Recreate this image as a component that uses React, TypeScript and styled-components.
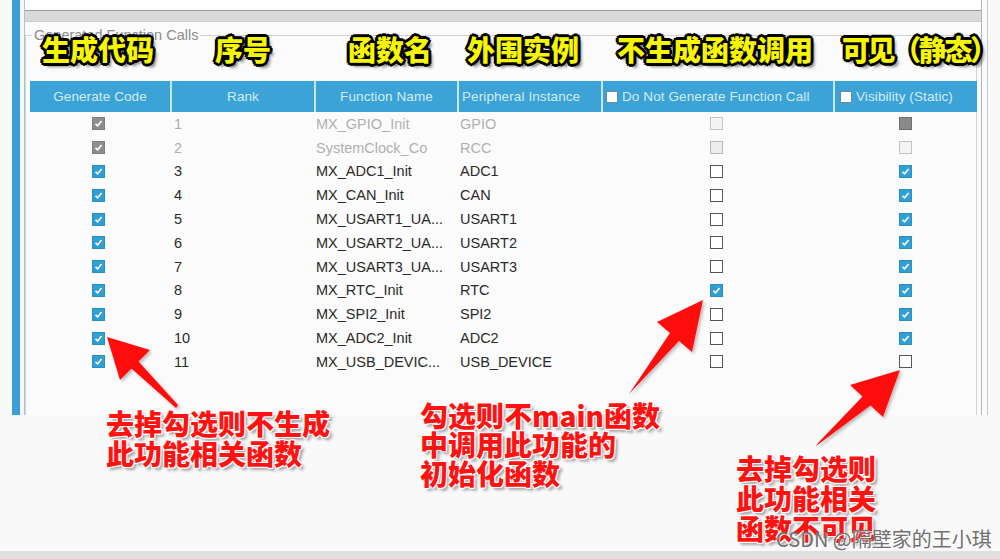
import React from "react";
import styled, { createGlobalStyle, css } from "styled-components";

const Global = createGlobalStyle`
  html, body { margin: 0; padding: 0; background: #fafafa; }
  body { font-family: "Liberation Sans", Arial, sans-serif; }
`;

const COLS = "140px 142px 141px 142px 230px 142px";

const Root = styled.div`
  position: relative;
  width: 1000px;
  height: 559px;
  overflow: hidden;
  display: flex;
  flex-direction: column;
  background: #f9f9f9;
`;

const Window = styled.div`
  display: flex;
  height: 415px;
  flex-shrink: 0;
`;

const LeftBar = styled.div`
  margin-left: 12px;
  width: 8px;
  background: #3c9fd5;
`;

const Gutter = styled.div`
  width: 4px;
  background: #f4f8fb;
`;

const Panel = styled.div`
  width: 956px;
  border-left: 1px solid #b9bfc4;
  border-right: 1px solid #b4b4b4;
  display: flex;
  flex-direction: column;
  background: #fbfbfb;
`;

const OuterEdge = styled.div`
  width: 5px;
  border-right: 1px solid #c9c9c9;
  background: #fafafa;
`;

const TopWhite = styled.div`
  height: 10px;
  background: #ffffff;
`;

const Band = styled.div`
  height: 10px;
  background: #d9d9d9;
  border-top: 1px solid #9d9d9d;
  border-bottom: 1px solid #cdcdcd;
`;

const Body = styled.div`
  flex: 1;
  padding: 5px 4px 0 0;
`;

const Group = styled.fieldset`
  margin: 0;
  padding: 0 0 0 4px;
  border: 1px solid #d2d2d2;
  border-bottom: none;
  height: 100%;
  box-sizing: border-box;
  min-width: 0;
`;

const Legend = styled.legend`
  margin-left: 2px;
  padding: 0 2px;
  font-size: 14.5px;
  line-height: 16px;
  color: #8c8c8c;
`;

const Table = styled.div`
  margin-top: 38px;
  width: 947px;
`;

const HeaderRow = styled.div`
  display: grid;
  grid-template-columns: ${COLS};
  column-gap: 2px;
  height: 31px;
  background: #c4e8f6;
`;

const HeadCell = styled.div<{ $left?: boolean }>`
  background: #3ba3d6;
  color: #d3ecf8;
  font-size: 13.5px;
  display: flex;
  align-items: center;
  justify-content: ${(p) => (p.$left ? "flex-start" : "center")};
  padding-left: ${(p) => (p.$left ? "3px" : "0")};
  white-space: nowrap;
  overflow: hidden;
  gap: 4px;
  letter-spacing: 0.1px;
`;

const Row = styled.div`
  display: grid;
  grid-template-columns: ${COLS};
  column-gap: 2px;
  height: 23.8px;
`;

const Cell = styled.div<{ $center?: boolean; $pad?: number; $dim?: boolean }>`
  display: flex;
  align-items: center;
  justify-content: ${(p) => (p.$center ? "center" : "flex-start")};
  padding-left: ${(p) => p.$pad ?? 0}px;
  font-size: 14.5px;
  color: ${(p) => (p.$dim ? "#b0b0b0" : "#2a2a2a")};
  white-space: nowrap;
  overflow: hidden;
`;

type BoxState = "checked" | "unchecked" | "grayChecked" | "grayFilled" | "disabled" | "disabledMixed" | "header";

const Box = styled.span<{ $s: BoxState; $dx?: number }>`
  display: inline-flex;
  align-items: center;
  justify-content: center;
  width: 13px;
  height: 13px;
  box-sizing: border-box;
  flex-shrink: 0;
  margin-left: ${(p) => p.$dx ?? 0}px;
  ${(p) => {
    switch (p.$s) {
      case "checked":
        return css`background: #2f9fd4; border: 1px solid #2a8fc2;`;
      case "grayChecked":
        return css`background: #8e8e8e; border: 1px solid #7d7d7d;`;
      case "grayFilled":
        return css`background: #8a8a8a; border: 1px solid #6f6f6f;`;
      case "disabled":
        return css`background: #f4f4f4; border: 1px solid #c4c4c4;`;
      case "disabledMixed":
        return css`background: #ededed; border: 1px solid #b8b8b8;`;
      case "header":
        return css`background: #ffffff; border: 1px solid #6a8aa0; width: 12px; height: 12px;`;
      default:
        return css`background: #ffffff; border: 1px solid #555;`;
    }
  }}
`;

const Check = () => (
  <svg width="9" height="9" viewBox="0 0 9 9">
    <path d="M1.5 4.8 L3.6 6.8 L7.6 2" fill="none" stroke="#ffffff" strokeWidth="1.6" />
  </svg>
);

const CheckBox = ({ s, dx }: { s: BoxState; dx?: number }) => (
  <Box $s={s} $dx={dx}>
    {(s === "checked" || s === "grayChecked") && <Check />}
  </Box>
);

const Spacer = styled.div`
  flex: 1;
`;

const BottomStrip = styled.div`
  height: 8px;
  background: #e0e0e0;
`;

const YellowLabel = styled.div<{ $x: number; $ls?: number }>`
  position: absolute;
  left: ${(p) => p.$x}px;
  top: 31px;
  font-family: "Noto Sans CJK SC", sans-serif;
  font-weight: 900;
  font-size: 28px;
  line-height: 36px;
  letter-spacing: ${(p) => p.$ls ?? 0}px;
  color: #f6f600;
  white-space: nowrap;
  text-shadow: -2px -2px 0 #000, 2px -2px 0 #000, -2px 2px 0 #000, 2px 2px 0 #000,
    0 -3px 0 #000, 0 3px 0 #000, -3px 0 0 #000, 3px 0 0 #000, 4px 4px 3px rgba(0, 0, 0, 0.45);
`;

const RedNote = styled.div<{ $x: number; $y: number; $lh: number }>`
  position: absolute;
  left: ${(p) => p.$x}px;
  top: ${(p) => p.$y}px;
  font-family: "Noto Sans CJK SC", sans-serif;
  font-weight: 900;
  font-size: 28px;
  line-height: ${(p) => p.$lh}px;
  color: #ff1212;
  white-space: pre;
  text-shadow: 1px 1px 0 #fff, -1px -1px 0 #fff, 1px -1px 0 #fff, -1px 1px 0 #fff,
    3px 3px 3px rgba(0, 0, 0, 0.35);
`;

const Watermark = styled.div`
  position: absolute;
  left: 776px;
  top: 526px;
  font-family: "Noto Sans CJK SC", sans-serif;
  font-size: 20px;
  line-height: 26px;
  color: #707070;
  white-space: nowrap;
  text-shadow: 1px 1px 0 rgba(255, 255, 255, 0.8);
`;

const ArrowLayer = styled.svg`
  position: absolute;
  left: 0;
  top: 0;
  pointer-events: none;
`;

type RowData = {
  gc: BoxState;
  rank: number;
  fn: string;
  pi: string;
  dng: BoxState;
  vis: BoxState;
  dim?: boolean;
};

const rows: RowData[] = [
  { gc: "grayChecked", rank: 1, fn: "MX_GPIO_Init", pi: "GPIO", dng: "disabled", vis: "grayFilled", dim: true },
  { gc: "grayChecked", rank: 2, fn: "SystemClock_Co", pi: "RCC", dng: "disabledMixed", vis: "disabled", dim: true },
  { gc: "checked", rank: 3, fn: "MX_ADC1_Init", pi: "ADC1", dng: "unchecked", vis: "checked" },
  { gc: "checked", rank: 4, fn: "MX_CAN_Init", pi: "CAN", dng: "unchecked", vis: "checked" },
  { gc: "checked", rank: 5, fn: "MX_USART1_UA...", pi: "USART1", dng: "unchecked", vis: "checked" },
  { gc: "checked", rank: 6, fn: "MX_USART2_UA...", pi: "USART2", dng: "unchecked", vis: "checked" },
  { gc: "checked", rank: 7, fn: "MX_USART3_UA...", pi: "USART3", dng: "unchecked", vis: "checked" },
  { gc: "checked", rank: 8, fn: "MX_RTC_Init", pi: "RTC", dng: "checked", vis: "checked" },
  { gc: "checked", rank: 9, fn: "MX_SPI2_Init", pi: "SPI2", dng: "unchecked", vis: "checked" },
  { gc: "checked", rank: 10, fn: "MX_ADC2_Init", pi: "ADC2", dng: "unchecked", vis: "checked" },
  { gc: "checked", rank: 11, fn: "MX_USB_DEVIC...", pi: "USB_DEVICE", dng: "unchecked", vis: "unchecked" },
];

const labels = [
  { x: 42, t: "生成代码", ls: 0 },
  { x: 215, t: "序号", ls: 0 },
  { x: 348, t: "函数名", ls: 0 },
  { x: 467, t: "外围实例", ls: 0 },
  { x: 617, t: "不生成函数调用", ls: 0 },
  { x: 842, t: "可见（静态）", ls: -2.4 },
];

const arrows = [
  "107,337 150,350 138.5,361.5 178,405 176,408 131.5,368.5 120,380",
  "703,300 657,322 670,333 631,391 629,394 679,341 692,352",
  "900,370 850,385 862.5,396.6 818,443 816,446 870.5,405.4 883,417",
];

export default function App() {
  return (
    <Root>
      <Global />
      <Window>
        <LeftBar />
        <Gutter />
        <Panel>
          <TopWhite />
          <Band />
          <Body>
            <Group>
              <Legend>Generated Function Calls</Legend>
              <Table>
                <HeaderRow>
                  <HeadCell>Generate Code</HeadCell>
                  <HeadCell>Rank</HeadCell>
                  <HeadCell>Function Name</HeadCell>
                  <HeadCell $left>Peripheral Instance</HeadCell>
                  <HeadCell $left>
                    <CheckBox s="header" />
                    Do Not Generate Function Call
                  </HeadCell>
                  <HeadCell $left>
                    <CheckBox s="header" dx={2} />
                    Visibility (Static)
                  </HeadCell>
                </HeaderRow>
                {rows.map((r) => (
                  <Row key={r.rank}>
                    <Cell $center>
                      <CheckBox s={r.gc} dx={-4} />
                    </Cell>
                    <Cell $pad={2} $dim={r.dim}>{r.rank}</Cell>
                    <Cell $dim={r.dim}>{r.fn}</Cell>
                    <Cell $pad={1} $dim={r.dim}>{r.pi}</Cell>
                    <Cell $center>
                      <CheckBox s={r.dng} dx={-3} />
                    </Cell>
                    <Cell $center>
                      <CheckBox s={r.vis} dx={-2} />
                    </Cell>
                  </Row>
                ))}
              </Table>
            </Group>
          </Body>
        </Panel>
        <OuterEdge />
      </Window>
      <Spacer />
      <BottomStrip />

      {labels.map((l) => (
        <YellowLabel key={l.t} $x={l.x} $ls={l.ls}>
          {l.t}
        </YellowLabel>
      ))}

      <ArrowLayer width="1000" height="559" viewBox="0 0 1000 559">
        <defs>
          <filter id="sh" x="-20%" y="-20%" width="140%" height="140%">
            <feDropShadow dx="2" dy="2" stdDeviation="1.5" floodColor="#000" floodOpacity="0.25" />
          </filter>
        </defs>
        {arrows.map((p) => (
          <polygon key={p} points={p} fill="#ff1010" filter="url(#sh)" />
        ))}
      </ArrowLayer>

      <RedNote $x={106} $y={408} $lh={30}>{"去掉勾选则不生成\n此功能相关函数"}</RedNote>
      <RedNote $x={420} $y={401} $lh={29}>{"勾选则不main函数\n中调用此功能的\n初始化函数"}</RedNote>
      <RedNote $x={736} $y={453} $lh={30}>{"去掉勾选则\n此功能相关\n函数不可见"}</RedNote>
      <Watermark>CSDN @隔壁家的王小琪</Watermark>
    </Root>
  );
}
